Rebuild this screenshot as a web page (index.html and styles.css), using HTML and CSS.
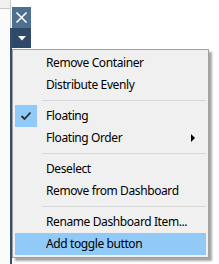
FILE: index.html
```html
<!DOCTYPE html>
<html>
<head>
<meta charset="utf-8">
<link rel="stylesheet" href="styles.css">
</head>
<body>
<div class="stage">
  <div class="pane">
    <div class="pane-top"></div>
    <div class="pane-body"></div>
  </div>
  <div class="selline"></div>
  <div class="ctrl">
    <div class="btn btn-close">
      <svg width="13" height="13" viewBox="0 0 13 13"><path d="M1.5 1.5 L11.5 11.5 M11.5 1.5 L1.5 11.5" stroke="#fff" stroke-width="1.6" fill="none"/></svg>
    </div>
    <div class="btn btn-more">
      <svg width="8" height="5" viewBox="0 0 8 5"><path d="M0 0 H8 L4 4.5 Z" fill="#fff"/></svg>
    </div>
  </div>
  <div class="menu">
    <div class="item">Remove Container</div>
    <div class="item">Distribute Evenly</div>
    <div class="sep"></div>
    <div class="item">
      <span class="check"><svg width="12" height="10" viewBox="0 0 12 10"><path d="M1.5 5 L4.5 8 L10.5 1.5" stroke="#2b2b2b" stroke-width="1.8" fill="none"/></svg></span>
      Floating
    </div>
    <div class="item">Floating Order<span class="arrow"></span></div>
    <div class="sep"></div>
    <div class="item">Deselect</div>
    <div class="item">Remove from Dashboard</div>
    <div class="sep"></div>
    <div class="item">Rename Dashboard Item...</div>
    <div class="item active">Add toggle button</div>
  </div>
</div>
</body>
</html>
```
FILE: styles.css
```css
html, body {
  margin: 0;
  padding: 0;
  background: #fff;
}
.stage {
  position: relative;
  width: 219px;
  height: 264px;
  overflow: hidden;
  font-family: "Noto Sans", "Open Sans", sans-serif;
  font-size: 12px;
  letter-spacing: -0.4px;
  color: #000;
}
.pane {
  width: 10px;
  height: 264px;
  display: flex;
  flex-direction: column;
  border-right: 1px solid #c8c8c8;
}
.pane-top {
  height: 8px;
  background: #f0f0f0;
  border-bottom: 1px solid #c8c8c8;
}
.pane-body {
  flex: 1;
  background: #fbfbfb;
}
.selline {
  position: absolute;
  left: 10px;
  top: 28px;
  width: 2px;
  height: 236px;
  background: #34506e;
}
.ctrl {
  position: absolute;
  left: 12px;
  top: 7px;
  width: 19px;
  display: flex;
  flex-direction: column;
}
.btn {
  display: flex;
  align-items: center;
  justify-content: center;
}
.btn-close {
  height: 21px;
  background: #4d6f90;
}
.btn-more {
  height: 20px;
  background: #2f4a68;
}
.menu {
  position: absolute;
  left: 12px;
  top: 49px;
  width: 191px;
  padding: 2px;
  background: #f0f0f0;
  border: 1px solid #a0a0a0;
  box-shadow: 3px 3px 2px rgba(0,0,0,0.35);
}
.item {
  position: relative;
  height: 22px;
  line-height: 22px;
  padding-left: 31px;
  white-space: nowrap;
}
.item.active {
  background: #91c9f7;
}
.check {
  position: absolute;
  left: 0;
  top: 0;
  width: 22px;
  height: 22px;
  background: #91c9f7;
  display: flex;
  align-items: center;
  justify-content: center;
}
.arrow {
  position: absolute;
  left: 176px;
  top: 7px;
  width: 0;
  height: 0;
  border-top: 4px solid transparent;
  border-bottom: 4px solid transparent;
  border-left: 4px solid #000;
}
.sep {
  height: 1px;
  background: #d7d7d7;
  margin: 4px 0 4px 27px;
}
```
